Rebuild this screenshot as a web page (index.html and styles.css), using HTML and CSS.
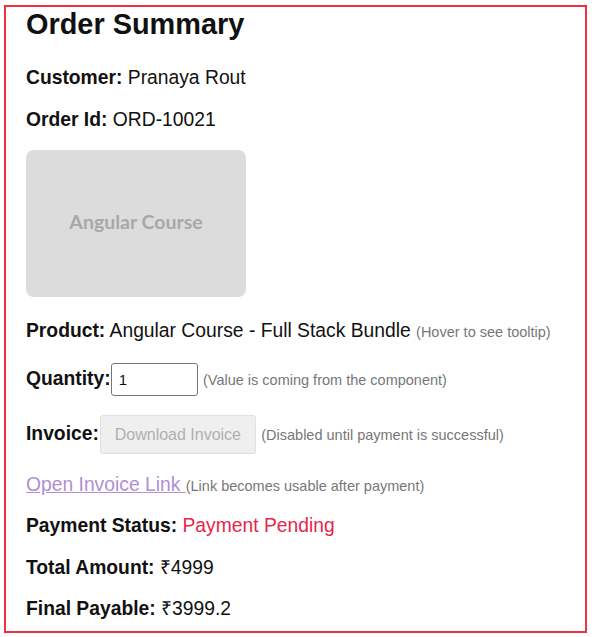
FILE: index.html
```html
<!DOCTYPE html>
<html lang="en">
<head>
<meta charset="utf-8">
<title>Order Summary</title>
<link rel="stylesheet" href="styles.css">
</head>
<body>
<div class="card">
  <h2 class="title">Order Summary</h2>
  <p class="row"><b>Customer:</b> Pranaya Rout</p>
  <p class="row"><b>Order Id:</b> ORD-10021</p>
  <div class="thumb">Angular Course</div>
  <p class="row"><b>Product:</b> Angular Course - Full Stack Bundle <span class="note">(Hover to see tooltip)</span></p>
  <p class="row"><b>Quantity:</b><input class="qty" type="text" value="1"> <span class="note">(Value is coming from the component)</span></p>
  <p class="row"><b>Invoice:</b><button class="btn" disabled>Download Invoice</button> <span class="note">(Disabled until payment is successful)</span></p>
  <p class="row link-row"><a class="link" href="#">Open Invoice Link </a><span class="note">(Link becomes usable after payment)</span></p>
  <p class="row status-row"><b>Payment Status:</b> <span class="pending">Payment Pending</span></p>
  <p class="row"><b>Total Amount:</b> ₹4999</p>
  <p class="row"><b>Final Payable:</b> ₹3999.2</p>
</div>
</body>
</html>
```

FILE: styles.css
```css
html, body {
  margin: 0;
  padding: 0;
  background: #ffffff;
}
body {
  padding: 5px 5px 0 4px;
  font-family: "Liberation Sans", Arial, sans-serif;
  color: #111;
}
.card {
  border: 2px solid #ee3340;
  padding: 0 20px;
  height: 628px;
  box-sizing: border-box;
  overflow: hidden;
}
.title {
  font-size: 28.9px;
  font-weight: bold;
  margin: 1px 0 27px 0;
  line-height: 32px;
}
.row {
  font-size: 19.3px;
  line-height: 22px;
  margin: 19.5px 0;
  white-space: nowrap;
}
.link-row {
  margin-bottom: 18.5px;
}
.status-row {
  margin-top: 18.5px;
}
.row b { font-weight: bold; }
.note {
  font-size: 14.5px;
  color: #777;
}
.thumb {
  width: 220px;
  height: 147px;
  box-sizing: border-box;
  padding-bottom: 4px;
  background: #dcdcdc;
  border-radius: 8px;
  display: flex;
  align-items: center;
  justify-content: center;
  font-family: Lato, sans-serif;
  font-weight: bold;
  font-size: 19.5px;
  color: #a8a8a8;
  margin-top: 19px;
  margin-bottom: 23px;
}
.qty {
  width: 87px;
  height: 33px;
  box-sizing: border-box;
  border: 1px solid #767676;
  border-radius: 3px;
  padding: 0 7px;
  font-family: "Liberation Sans", Arial, sans-serif;
  font-size: 15px;
  color: #111;
  margin: 0;
  vertical-align: middle;
}
.btn {
  width: 156px;
  height: 39px;
  box-sizing: border-box;
  background: #efefef;
  border: 1px solid #e0e0e0;
  border-radius: 3px;
  font-family: "Liberation Sans", Arial, sans-serif;
  font-size: 16px;
  color: #b0b0b0;
  margin: 0 0 0 1px;
  padding: 0;
  vertical-align: middle;
}
.link {
  color: #b08fd2;
  text-decoration: underline;
}
.pending { color: #e8254a; }
```
